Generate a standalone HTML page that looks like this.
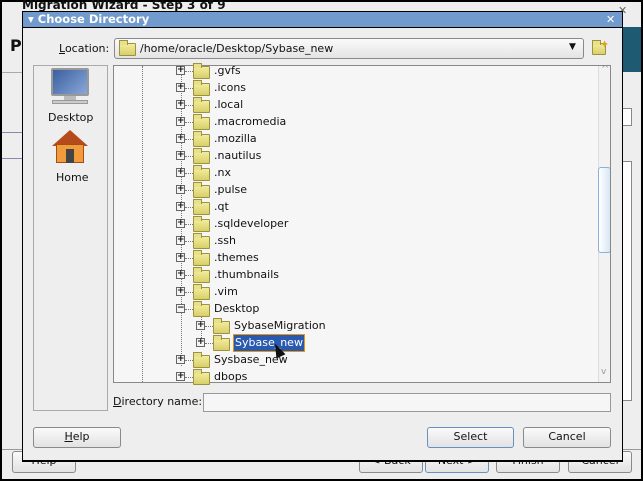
<!DOCTYPE html>
<html><head><style>
*{margin:0;padding:0;box-sizing:border-box}
body{width:643px;height:481px;overflow:hidden;background:#000;font-family:"DejaVu Sans","Liberation Sans",sans-serif;font-size:11px;color:#111;position:relative}
.a{position:absolute}
.btn{position:absolute;border:1px solid #8a8a8a;border-radius:3px;background:linear-gradient(#fafafa,#e2e2e2);text-align:center;line-height:18px;font-size:11px}
.row{position:absolute;height:17px;line-height:17px;white-space:nowrap}
.pm{position:absolute;width:9px;height:9px;border:1px solid #666;background:#f4f4f4;font-size:9px;line-height:7px;text-align:center;font-weight:bold}
.fd{position:absolute;width:17px;height:13px;background:linear-gradient(#f2ec9c,#d8cf6a);border:1px solid #9c9240;border-radius:1px}
.fd:before{content:"";position:absolute;left:-1px;top:-4px;width:7px;height:4px;background:#e8e08a;border:1px solid #9c9240;border-bottom:none}
.dl{position:absolute;border-top:1px dotted #777;height:0}
</style></head><body>
<!-- background window -->
<div class="a" style="left:2px;top:2px;width:639px;height:477px;background:#eeeeee"></div>
<div class="a" style="left:22px;top:0;font-weight:bold;font-size:12px;line-height:11px;color:#111">Migration Wizard - Step 3 of 9</div>
<div class="a" style="left:618px;top:4px;font-weight:bold;color:#666">✕</div>
<div class="a" style="left:622px;top:27px;width:19px;height:45px;background:#1f5a73"></div>
<div class="a" style="left:10px;top:36px;font-weight:bold;font-size:16px">P</div>
<div class="a" style="left:2px;top:72px;width:20px;height:1px;background:#aaa"></div>
<div class="a" style="left:2px;top:132px;width:20px;height:1px;background:#88a"></div>
<div class="a" style="left:2px;top:158px;width:20px;height:1px;background:#88a"></div>
<div class="a" style="left:2px;top:449px;width:639px;height:1px;background:#999"></div>
<div class="btn" style="left:12px;top:451px;width:64px;height:22px">Help</div>
<div class="btn" style="left:359px;top:451px;width:64px;height:22px">&lt; Back</div>
<div class="btn" style="left:425px;top:451px;width:64px;height:22px;border-color:#6a8fc0">Next &gt;</div>
<div class="btn" style="left:496px;top:451px;width:64px;height:22px">Finish</div>
<div class="btn" style="left:568px;top:451px;width:64px;height:22px">Cancel</div>
<div class="a" style="left:622px;top:108px;width:10px;height:18px;border:1px solid #888;background:#fff"></div>
<div class="a" style="left:622px;top:161px;width:10px;height:240px;border:1px solid #888;background:#fff"></div>
<!-- dialog -->
<div class="a" style="left:22px;top:11px;width:601px;height:451px;background:#000"></div>
<div class="a" style="left:23px;top:12px;width:599px;height:15px;background:#729bcd"></div>
<div class="a" style="left:28px;top:12px;color:#fff;font-weight:bold;font-size:11.5px;line-height:15px">▾ Choose Directory</div>
<div class="a" style="left:606px;top:12px;color:#fff;font-weight:bold;line-height:15px">✕</div>
<div class="a" style="left:23px;top:28px;width:599px;height:432px;background:#eeeeee"></div>
<div class="a" style="left:59px;top:42px"><u>L</u>ocation:</div>
<div class="a" style="left:114px;top:38px;width:470px;height:21px;border:1px solid #8a8a8a;border-radius:3px;background:linear-gradient(#fafafa,#e4e4e4)"></div>
<div class="fd" style="left:119px;top:43px"></div>
<div class="a" style="left:140px;top:42px">/home/oracle/Desktop/Sybase_new</div>
<div class="a" style="left:569px;top:42px;font-size:9px">▼</div>
<div class="fd" style="left:592px;top:43px;width:14px;height:12px"></div>
<div class="a" style="left:600px;top:38px;color:#e0a020;font-size:11px;font-weight:bold">✦</div>
<!-- left panel -->
<div class="a" style="left:33px;top:65px;width:75px;height:346px;border:1px solid #aaa;background:#eeeeee"></div>
<div class="a" style="left:51px;top:68px;width:38px;height:28px;border:2px solid #999;background:linear-gradient(135deg,#3a5fa0,#8aa8d8);border-radius:2px"></div>
<div class="a" style="left:64px;top:96px;width:12px;height:4px;background:#bbb"></div>
<div class="a" style="left:52px;top:100px;width:36px;height:4px;background:#ccc;border:1px solid #999"></div>
<div class="a" style="left:48px;top:111px">Desktop</div>
<div class="a" style="left:52px;top:130px;width:0;height:0;border-left:18px solid transparent;border-right:18px solid transparent;border-bottom:16px solid #b54a1a"></div>
<div class="a" style="left:56px;top:144px;width:28px;height:19px;background:#f39a3c;border:1px solid #a05010"></div>
<div class="a" style="left:66px;top:149px;width:8px;height:14px;background:#444"></div>
<div class="a" style="left:56px;top:171px">Home</div>
<!-- tree -->
<div class="a" style="left:113px;top:65px;width:498px;height:318px;border:1px solid #888;background:#f6f6f6;overflow:hidden">
<div class="a" style="left:28px;top:0;height:318px;border-left:1px dotted #777"></div>
<div class="a" style="left:67px;top:0;height:300px;border-left:1px dotted #777"></div>
<div class="a" style="left:87px;top:248px;height:30px;border-left:1px dotted #777"></div>
<div class="a" style="left:484px;top:0;width:13px;height:316px;background:#f2f2f2;border-left:1px solid #ddd"></div>
<div class="a" style="left:487px;top:-2px;color:#999;font-size:10px">^</div>
<div class="a" style="left:484px;top:101px;width:13px;height:86px;border:1px solid #8ab0d8;border-radius:3px;background:linear-gradient(90deg,#fff,#d8e6f4)"></div>
<div class="a" style="left:487px;top:301px;color:#999;font-size:9px">v</div>
</div>
<div id="t"></div>
<script>
var r=[".gvfs",".icons",".local",".macromedia",".mozilla",".nautilus",".nx",".pulse",".qt",".sqldeveloper",".ssh",".themes",".thumbnails",".vim","Desktop","SybaseMigration","Sybase_new","Sysbase_new","dbops"];
var h="";
r.forEach(function(n,i){var y=71+17*i;var ind=(i==15||i==16)?20:0;
var px=176+ind;
h+='<div class="pm" style="left:'+px+'px;top:'+(y-5)+'px">'+(i==14?'−':'+')+'</div>';
h+='<div class="dl" style="left:'+(px+9)+'px;top:'+y+'px;width:8px"></div>';
h+='<div class="fd" style="left:'+(193+ind)+'px;top:'+(y-5)+'px"></div>';
var tx=214+ind;
if(i==16)h+='<div class="row" style="left:'+(tx-1)+'px;top:'+(y-9)+'px;background:#2a5ab0;color:#fff;border:1px solid #e8960a;padding:0 1px;height:18px;line-height:16px">'+n+'</div>';
else h+='<div class="row" style="left:'+tx+'px;top:'+(y-9)+'px">'+n+'</div>';});
document.getElementById("t").innerHTML=h;
</script>
<div class="a" style="left:273px;top:343px;width:0;height:0;border-left:5px solid transparent;border-right:5px solid transparent;border-bottom:14px solid #111;transform:rotate(-25deg)"></div>
<div class="a" style="left:113px;top:395px"><u>D</u>irectory name:</div>
<div class="a" style="left:203px;top:393px;width:408px;height:19px;border:1px solid #999;background:#f6f6f6"></div>
<div class="btn" style="left:33px;top:427px;width:88px;height:21px"><u>H</u>elp</div>
<div class="btn" style="left:427px;top:427px;width:87px;height:21px;border-color:#6a8fc0">Select</div>
<div class="btn" style="left:523px;top:427px;width:88px;height:21px">Cancel</div>
</body></html>
